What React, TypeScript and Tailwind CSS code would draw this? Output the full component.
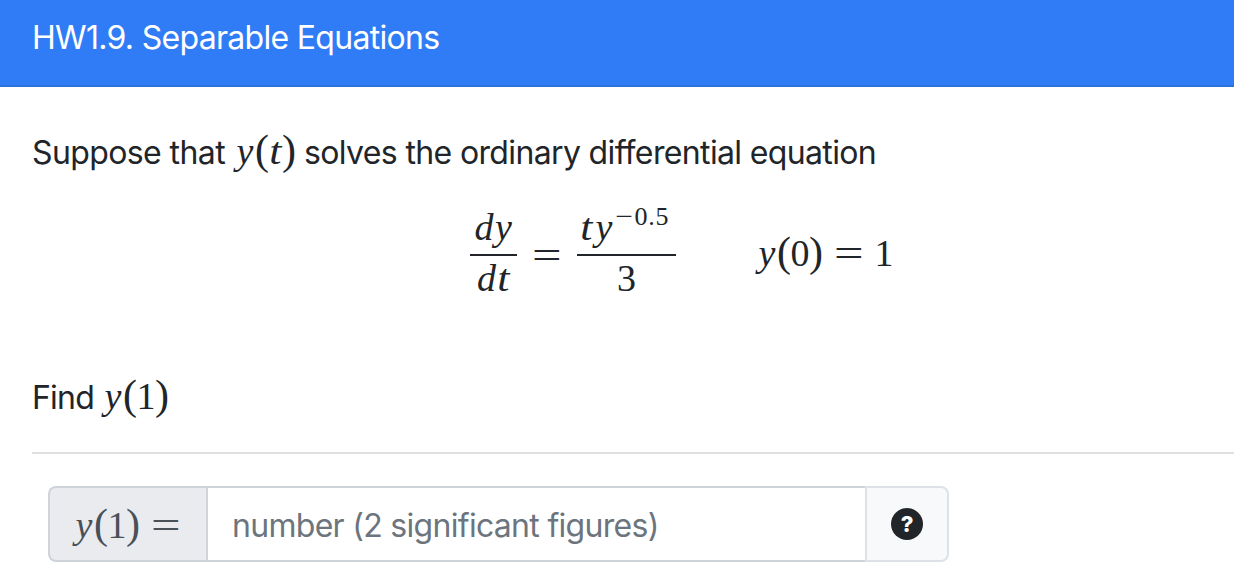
import type { ReactNode } from "react";

// One math glyph in a fixed advance box
function Glyph({ children, className }: { children: ReactNode; className: string }) {
    return <span className={`inline-flex shrink-0 justify-center leading-none ${className}`}>{children}</span>;
}

function Paren({ children }: { children: ReactNode }) {
    return <Glyph className="w-[14px] text-[42px]">{children}</Glyph>;
}

function Equals() {
    return (
        <Glyph className="w-[28px]">
            <span className="scale-x-[1.38]">=</span>
        </Glyph>
    );
}

function YOf({ arg, italic = false }: { arg: string; italic?: boolean }) {
    return (
        <span className="inline-flex items-baseline pl-px">
            <Glyph className="w-[20px] italic">y</Glyph>
            <Paren>(</Paren>
            <Glyph className={italic ? "w-[13px] italic" : "w-[18px]"}>
                <span className={italic ? "scale-x-[1.15]" : ""}>{arg}</span>
            </Glyph>
            <Paren>)</Paren>
        </span>
    );
}

const mathFont = "font-['Liberation_Serif',serif] text-[38px]";

function Equation() {
    return (
        <div className={`flex h-[100px] items-start pl-[470px] ${mathFont}`}>
            <div className="flex w-[47px] flex-col">
                <div className="flex h-[50px] items-baseline justify-center pt-[4px] italic">
                    <Glyph className="w-[20px]">d</Glyph>
                    <Glyph className="w-[19px]">y</Glyph>
                </div>
                <div className="h-[2px] bg-[#212529]" />
                <div className="flex items-baseline justify-center pt-[3px] italic">
                    <Glyph className="w-[20px]">d</Glyph>
                    <Glyph className="w-[14px]">
                        <span className="scale-x-[1.15]">t</span>
                    </Glyph>
                </div>
            </div>
            <div className="ml-[16px] mr-[16px] flex pt-[32px]">
                <Equals />
            </div>
            <div className="flex w-[99px] flex-col">
                <div className="flex h-[50px] items-start pl-[2px]">
                    <span className="flex items-baseline pt-[4px] italic">
                        <Glyph className="w-[15px]">
                            <span className="scale-x-[1.15]">t</span>
                        </Glyph>
                        <Glyph className="w-[20px]">y</Glyph>
                    </span>
                    <span className="flex items-baseline text-[26px]">
                        <Glyph className="w-[20px]">
                            <span className="scale-x-[1.2]">−</span>
                        </Glyph>
                        <Glyph className="w-[14px]">0</Glyph>
                        <Glyph className="w-[7px]">.</Glyph>
                        <Glyph className="w-[14px]">5</Glyph>
                    </span>
                </div>
                <div className="h-[2px] bg-[#212529]" />
                <div className="flex items-baseline justify-center pt-[3px]">
                    <Glyph className="w-[19px]">3</Glyph>
                </div>
            </div>
            <div className="ml-[80px] flex items-baseline pt-[27px]">
                <YOf arg="0" />
                <span className="ml-[12px] mr-[12px] inline-flex">
                    <Equals />
                </span>
                <Glyph className="w-[18px]">1</Glyph>
            </div>
        </div>
    );
}

export default function App() {
    return (
        <div className="flex h-[584px] w-[1234px] flex-col overflow-hidden bg-white font-['Inter',sans-serif] text-[32px] text-[#212529]">
            {/* Card header */}
            <header className="h-[87px] border-b-2 border-[#2c70dc] bg-[#307cf6] pl-[32px] pt-[14px] leading-[48px] text-white">
                <span className="tracking-[-0.7px]">HW1.9. Separable Equations</span>
            </header>

            <main className="flex flex-col">
                <p className="mt-[40px] flex h-[56px] items-baseline pl-[32px] leading-[48px]">
                    <span className="w-[202px] whitespace-nowrap tracking-[-0.6px]">Suppose that</span>
                    <span className={mathFont}>
                        <YOf arg="t" italic />
                    </span>
                    <span className="ml-[8px] whitespace-nowrap tracking-[-0.64px]">solves the ordinary differential equation</span>
                </p>

                <div className="mt-[21px]">
                    <Equation />
                </div>

                <p className="mt-[68px] flex h-[56px] items-baseline pl-[32px] leading-[48px]">
                    <span className="w-[70px] whitespace-nowrap tracking-[-0.8px]">Find</span>
                    <span className={mathFont}>
                        <YOf arg="1" />
                    </span>
                </p>

                <hr className="ml-[32px] mt-[24px] border-t-2 border-[#e0e0e0]" />

                {/* Answer input */}
                <div className="ml-[48px] mt-[32px] flex h-[76px] w-[901px]">
                    <label className={`flex w-[158px] items-baseline rounded-l-lg border-2 border-r-0 border-[#ced4da] bg-[#e9ebef] pl-[23px] pt-[15px] text-[#495057] ${mathFont}`}>
                        <YOf arg="1" />
                        <span className="ml-[12px] inline-flex">
                            <Equals />
                        </span>
                    </label>
                    <input
                        className="w-[659px] border-2 border-r-0 border-[#ced4da] bg-white pl-[24px] pt-[3px] tracking-[-0.7px] outline-none placeholder:text-[#6c757d]"
                        placeholder="number (2 significant figures)"
                    />
                    <button className="flex flex-1 items-center justify-center rounded-r-lg border-2 border-[#dee2e6] bg-[#f8f9fa]">
                        <span className="flex size-[32px] items-center justify-center rounded-full bg-[#212529] text-[22px] font-extrabold leading-none text-white">
                            ?
                        </span>
                    </button>
                </div>
            </main>
        </div>
    );
}
